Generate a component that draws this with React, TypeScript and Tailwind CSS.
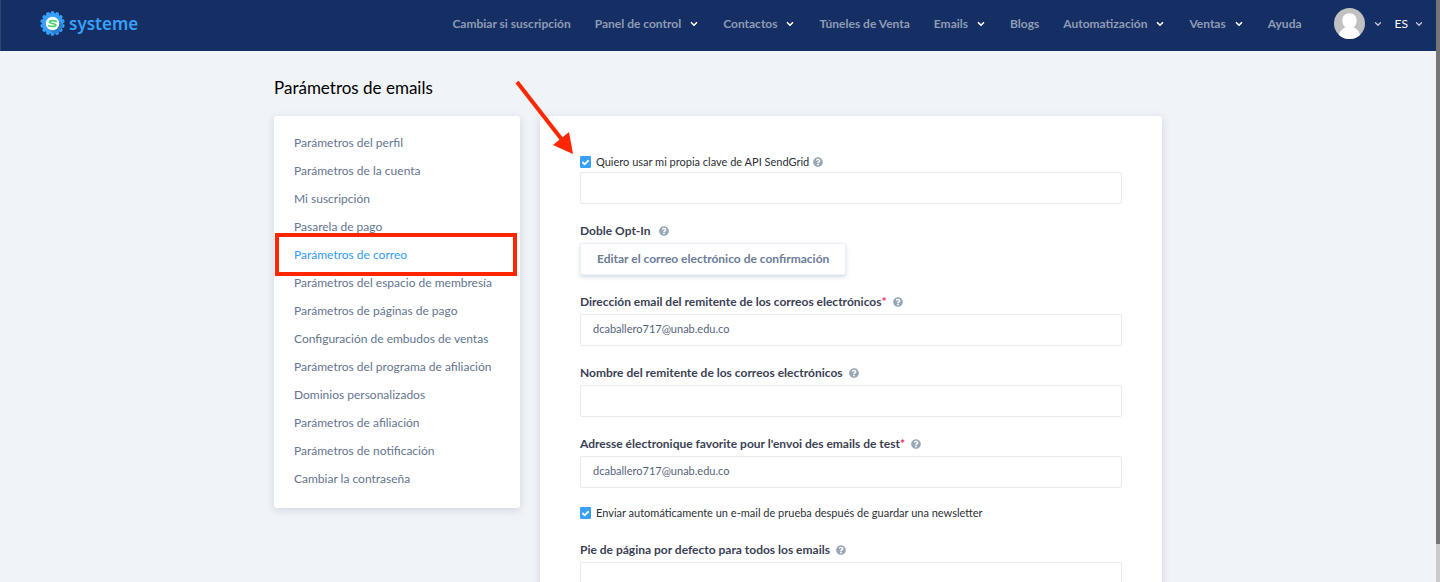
import React, { useState } from 'react';
import { FaCheck, FaQuestionCircle } from 'react-icons/fa';
import { FiChevronDown } from 'react-icons/fi';
import { clsx } from 'clsx';

interface NavItem {
  label: string;
  hasMenu?: boolean;
}

const navItems: NavItem[] = [
  { label: 'Cambiar si suscripción' },
  { label: 'Panel de control', hasMenu: true },
  { label: 'Contactos', hasMenu: true },
  { label: 'Túneles de Venta' },
  { label: 'Emails', hasMenu: true },
  { label: 'Blogs' },
  { label: 'Automatización', hasMenu: true },
  { label: 'Ventas', hasMenu: true },
  { label: 'Ayuda' },
];

const settingsLinks = [
  'Parámetros del perfil',
  'Parámetros de la cuenta',
  'Mi suscripción',
  'Pasarela de pago',
  'Parámetros de correo',
  'Parámetros del espacio de membresía',
  'Parámetros de páginas de pago',
  'Configuración de embudos de ventas',
  'Parámetros del programa de afiliación',
  'Dominios personalizados',
  'Parámetros de afiliación',
  'Parámetros de notificación',
  'Cambiar la contraseña',
];

const activeLink = 'Parámetros de correo';

const teeth = Array.from({ length: 14 }, (_, i) => (i * 360) / 14);

function Logo() {
  return (
    <a href="#" className="flex items-center gap-1">
      <svg width="25" height="25" viewBox="0 0 26 26" aria-hidden="true">
        <g fill="#37a0fb">
          {teeth.map((angle) => (
            <rect
              key={angle}
              x="11.2"
              y="0.3"
              width="3.6"
              height="5"
              rx="1"
              transform={`rotate(${angle} 13 13)`}
            />
          ))}
          <circle cx="13" cy="13" r="11" />
        </g>
        <path d="M18 8.5 L23.8 14 A11 11 0 0 1 14 24 L8 18 Z" fill="#2b80cc" />
        <circle cx="13" cy="13" r="7" fill="#fff" />
        <path
          d="M17.600 11.200 C15.500 9.600 10 9.600 9.800 11.400 C9.600 13.200 16.600 12.800 16.400 14.800 C16.200 16.600 11 16.400 8.400 15"
          fill="none"
          stroke="#4fcf70"
          strokeWidth="1.8"
        />
      </svg>
      <span className="font-['Noto_Sans',sans-serif] text-[17px] leading-6 font-semibold text-[#37a0fb]">
        systeme
      </span>
    </a>
  );
}

function Header() {
  return (
    <header className="flex h-[51px] shrink-0 items-center justify-between border-l border-[#2c4373] bg-[#152e63] pr-3 pb-1 pl-[39px]">
      <Logo />
      <div className="flex items-center">
        <nav className="flex items-center gap-6">
          {navItems.map((item) => (
            <a
              key={item.label}
              href="#"
              className="flex items-center gap-2 text-xs font-bold whitespace-nowrap text-[#8e9db5]"
            >
              {item.label}
              {item.hasMenu && (
                <FiChevronDown size={10} strokeWidth={4} className="text-white" />
              )}
            </a>
          ))}
        </nav>
        <button
          type="button"
          aria-label="Cuenta"
          className="ml-8 flex items-center gap-2 text-[#c3cbd9]"
        >
          <svg width="31" height="31" viewBox="0 0 32 32" aria-hidden="true">
            <clipPath id="avatar">
              <circle cx="16" cy="16" r="16" />
            </clipPath>
            <g clipPath="url(#avatar)">
              <rect width="32" height="32" fill="#c1c1c1" />
              <path
                d="M16 5.500c4.600 0 7.400 3 7.400 7.400 0 3.400-1.400 5.800-3.200 7.200 3.800 1.200 6.300 4.700 7.300 9.400V32h-23v-2.500c1-4.700 3.500-8.200 7.300-9.400-1.800-1.400-3.200-3.800-3.200-7.200 0-4.400 2.800-7.400 7.400-7.400z"
                fill="#fff"
              />
            </g>
          </svg>
          <FiChevronDown size={10} strokeWidth={3} />
        </button>
        <button
          type="button"
          className="ml-3 flex items-center gap-1.5 text-xs text-white"
        >
          ES
          <FiChevronDown size={10} strokeWidth={3} className="text-[#c3cbd9]" />
        </button>
      </div>
    </header>
  );
}

function Sidebar() {
  return (
    <aside className="w-[246px] shrink-0 rounded-[3px] bg-white pt-[13px] pb-[15px] shadow-[0_2px_8px_rgba(60,80,110,0.18)]">
      <ul>
        {settingsLinks.map((link) => (
          <li key={link} className="relative">
            <a
              href="#"
              className={clsx(
                'block px-5 text-xs leading-7 whitespace-nowrap',
                link === activeLink ? 'text-[#2f9bf7]' : 'text-[#64748f]'
              )}
            >
              {link}
            </a>
            {link === activeLink && (
              <div className="pointer-events-none absolute -top-2 right-[3px] -bottom-[7px] left-px z-10 border-4 border-[#ff2600]" />
            )}
          </li>
        ))}
      </ul>
    </aside>
  );
}

function HelpIcon() {
  return <FaQuestionCircle size={10} className="shrink-0 text-[#98a7b5]" />;
}

interface FieldProps {
  id: string;
  label: string;
  required?: boolean;
  defaultValue?: string;
}

const inputClass =
  'block h-8 w-full rounded-[2px] border border-[#e8eaed] bg-white px-3 pb-1 text-[11px] text-[#56647a] outline-none';

function Field({ id, label, required, defaultValue }: FieldProps) {
  return (
    <div>
      <div className="flex h-6 items-center gap-1.5">
        <label htmlFor={id} className="text-xs font-bold text-[#3b3f54]">
          {label}
          {required && <span className="text-[#f5245f]">*</span>}
        </label>
        <HelpIcon />
      </div>
      <input id={id} type="text" defaultValue={defaultValue} className={inputClass} />
    </div>
  );
}

interface CheckboxProps {
  id: string;
  label: string;
  help?: boolean;
}

function Checkbox({ id, label, help }: CheckboxProps) {
  const [checked, setChecked] = useState(true);

  return (
    <div className="flex h-5 items-center gap-1">
      <span className="relative mr-px flex">
        <input
          id={id}
          type="checkbox"
          checked={checked}
          onChange={() => setChecked(!checked)}
          className="h-3 w-[11px] appearance-none rounded-[1px] border border-[#37a0fb] bg-white checked:bg-[#37a0fb]"
        />
        {checked && (
          <FaCheck
            size={7}
            stroke="currentColor"
            strokeWidth={40}
            className="pointer-events-none absolute inset-0 m-auto text-white"
          />
        )}
      </span>
      <label htmlFor={id} className="text-[11px] text-[#2c2f36]">
        {label}
      </label>
      {help && <HelpIcon />}
    </div>
  );
}

function Arrow() {
  return (
    <svg
      width="62"
      height="76"
      viewBox="0 0 62 76"
      className="pointer-events-none absolute -top-9 -left-[26px] z-10"
      aria-hidden="true"
    >
      <path d="M3 2 L49 61" stroke="#ff2600" strokeWidth="4" />
      <path d="M59 74 L39 65 L55 52 Z" fill="#ff2600" />
    </svg>
  );
}

function EmailSettings() {
  return (
    <form className="relative flex min-w-0 flex-1 flex-col gap-[15px] rounded-[3px] bg-white px-10 pt-9 pb-10 shadow-[0_2px_8px_rgba(60,80,110,0.18)]">
      <Arrow />
      <div>
        <Checkbox
          id="use-sendgrid"
          label="Quiero usar mi propia clave de API SendGrid"
          help
        />
        <input type="text" aria-label="Clave de API SendGrid" className={inputClass} />
      </div>
      <div>
        <div className="flex h-6 items-center gap-2">
          <span className="text-xs font-bold text-[#3b3f54]">Doble Opt-In</span>
          <HelpIcon />
        </div>
        <button
          type="button"
          className="block h-8 rounded-[2px] border border-[#eaf0f6] bg-white px-4 text-xs font-bold text-[#6b7c96] shadow-[0_2px_4px_rgba(80,110,150,0.25)]"
        >
          Editar el correo electrónico de confirmación
        </button>
      </div>
      <Field
        id="sender-email"
        label="Dirección email del remitente de los correos electrónicos"
        required
        defaultValue="dcaballero717@unab.edu.co"
      />
      <Field id="sender-name" label="Nombre del remitente de los correos electrónicos" />
      <Field
        id="test-email"
        label="Adresse électronique favorite pour l'envoi des emails de test"
        required
        defaultValue="dcaballero717@unab.edu.co"
      />
      <Checkbox
        id="auto-test"
        label="Enviar automáticamente un e-mail de prueba después de guardar una newsletter"
      />
      <Field id="footer" label="Pie de página por defecto para todos los emails" />
    </form>
  );
}

function App() {
  return (
    <div className="flex h-screen overflow-hidden bg-[#f0f3f8] font-[Lato,sans-serif]">
      <div className="flex min-w-0 flex-1 flex-col overflow-hidden">
        <Header />
        <main className="mx-auto w-full max-w-[888px] pt-[25px]">
          <h1 className="text-[17px] leading-6 text-black">Parámetros de emails</h1>
          <div className="mt-4 flex items-start gap-5">
            <Sidebar />
            <EmailSettings />
          </div>
        </main>
      </div>
      <div className="w-1 shrink-0 bg-[#cacaca]">
        <div className="h-[93.5%] bg-[#757575]" />
      </div>
    </div>
  );
}

export default App;
